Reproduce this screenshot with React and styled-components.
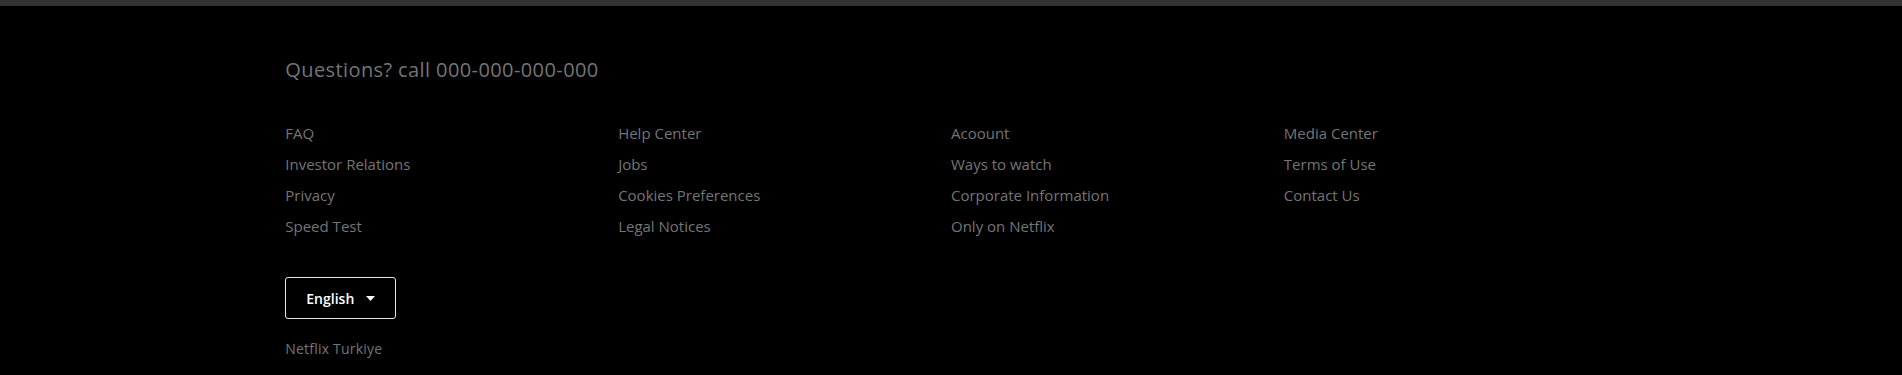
import React from 'react';
import styled, { createGlobalStyle } from 'styled-components';

const GlobalStyle = createGlobalStyle`
    html, body {
        margin: 0;
        padding: 0;
        background: #000;
    }

    body {
        font-family: 'Open Sans', 'Liberation Sans', sans-serif;
    }
`;

const Footer = styled.footer`
    background: #000;
    border-top: 6px solid #333333;
    min-height: 375px;
    box-sizing: border-box;
`;

const Container = styled.div`
    width: 70%;
    margin: 0 auto;
    padding-top: 50px;
    padding-bottom: 40px;
    display: flex;
    flex-direction: column;
    align-items: flex-start;
`;

const Questions = styled.p`
    margin: 0;
    color: #757575;
    font-size: 20px;
    line-height: 28px;
    letter-spacing: 0.4px;
`;

const LinkGrid = styled.ul`
    list-style: none;
    margin: 39px 0 0;
    padding: 0;
    width: 100%;
    display: grid;
    grid-template-columns: repeat(4, 1fr);
    grid-auto-flow: column;
    grid-template-rows: repeat(4, 20px);
    row-gap: 11px;
`;

const LinkItem = styled.li`
    grid-column: ${props => props.col};
    font-size: 15px;
    line-height: 20px;
`;

const FooterLink = styled.a`
    color: #757575;
    text-decoration: none;
`;

const LanguageButton = styled.button`
    margin-top: 41px;
    height: 42px;
    box-sizing: border-box;
    padding: 0 20px;
    display: flex;
    align-items: center;
    gap: 12px;
    background: transparent;
    border: 1px solid #e6e6e6;
    border-radius: 3px;
    color: #fff;
    font-family: 'Open Sans', 'Liberation Sans', sans-serif;
    font-size: 14px;
    font-weight: 600;
    cursor: pointer;
`;

const Country = styled.p`
    margin: 20px 0 0;
    color: #757575;
    font-size: 14px;
    line-height: 20px;
    letter-spacing: 0.2px;
`;

const columns = [
    ['FAQ', 'Investor Relations', 'Privacy', 'Speed Test'],
    ['Help Center', 'Jobs', 'Cookies Preferences', 'Legal Notices'],
    ['Acoount', 'Ways to watch', 'Corporate Information', 'Only on Netflix'],
    ['Media Center', 'Terms of Use', 'Contact Us']
];

const Caret = () => (
    <svg width="9" height="5" viewBox="0 0 9 5">
        <polygon points="0,0 9,0 4.5,5" fill="#fff" />
    </svg>
);

const App = () => (
    <>
        <GlobalStyle />
        <Footer>
            <Container>
                <Questions>Questions? call 000-000-000-000</Questions>
                <LinkGrid>
                    {columns.map((links, i) =>
                        links.map(label => (
                            <LinkItem key={label} col={i + 1}>
                                <FooterLink href="#">{label}</FooterLink>
                            </LinkItem>
                        ))
                    )}
                </LinkGrid>
                <LanguageButton type="button">
                    English
                    <Caret />
                </LanguageButton>
                <Country>Netflix Turkiye</Country>
            </Container>
        </Footer>
    </>
);

export default App;
